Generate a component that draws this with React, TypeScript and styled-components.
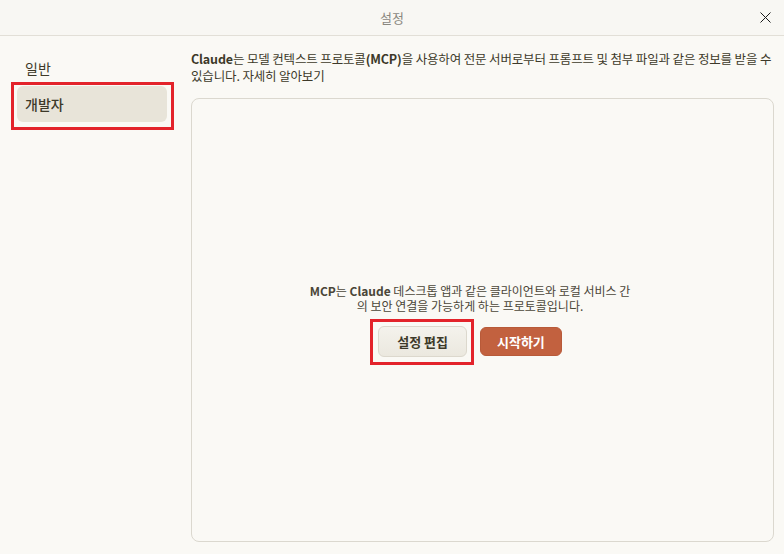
import React from "react";
import styled, { createGlobalStyle } from "styled-components";

const GlobalStyle = createGlobalStyle`
  html, body { margin: 0; padding: 0; background: #faf9f5; }
  body {
    font-family: "Noto Sans", "Noto Sans CJK KR", sans-serif;
    color: #3d3929;
  }
`;

const Window = styled.div`
  width: 784px;
  height: 554px;
  display: flex;
  flex-direction: column;
  background: #faf9f5;
  overflow: hidden;
`;

const TitleBar = styled.div`
  height: 35px;
  flex: none;
  display: grid;
  grid-template-columns: 1fr auto 1fr;
  align-items: center;
  background: #f8f7f3;
  border-bottom: 1px solid #e2dfd7;
`;

const Title = styled.div`
  grid-column: 2;
  font-size: 13px;
  color: #8a877f;
  font-family: "Noto Sans CJK KR", sans-serif;
`;

const CloseButton = styled.button`
  grid-column: 3;
  justify-self: end;
  margin-right: 12px;
  width: 14px;
  height: 14px;
  padding: 0;
  border: none;
  background: transparent;
  display: flex;
  align-items: center;
  justify-content: center;
`;

const Body = styled.div`
  flex: 1;
  display: flex;
  gap: 24px;
  padding: 0 10px 12px 17px;
  min-height: 0;
`;

const Sidebar = styled.nav`
  width: 150px;
  flex: none;
  padding-top: 14px;
  display: flex;
  flex-direction: column;
`;

const NavItem = styled.div<{ $active?: boolean; $marked?: boolean }>`
  position: relative;
  height: 36px;
  display: flex;
  align-items: center;
  padding-left: 8px;
  border-radius: 6px;
  font-size: 14px;
  font-family: "Noto Sans CJK KR", sans-serif;
  font-weight: ${(p) => (p.$active ? 500 : 400)};
  background: ${(p) => (p.$active ? "#e8e4d9" : "transparent")};
  color: #3d3929;
  ${(p) =>
    p.$marked &&
    `
    &::after {
      content: "";
      position: absolute;
      top: -4px; bottom: -8px; left: -6px; right: -7px;
      border: 3px solid #e3232b;
      pointer-events: none;
    }
  `}
`;

const Main = styled.main`
  flex: 1;
  display: flex;
  flex-direction: column;
  padding-top: 14px;
  min-width: 0;
`;

const Intro = styled.p`
  margin: 0 0 14px;
  font-size: 12.5px;
  letter-spacing: -0.15px;
  line-height: 17px;
  font-family: "Noto Sans CJK KR", sans-serif;
  color: #3d3929;
`;

const Strong = styled.span`
  font-weight: 700;
  font-family: "Noto Sans CJK KR", sans-serif;
`;

const Link = styled.a`
  color: #3d3929;
  text-decoration: none;
  cursor: pointer;
`;

const Panel = styled.section`
  flex: 1;
  border: 1px solid #dbd8cf;
  border-radius: 8px;
  display: flex;
  flex-direction: column;
  align-items: center;
  justify-content: center;
  padding-right: 25px;
`;

const PanelText = styled.p`
  margin: 0 0 13px;
  width: 330px;
  text-align: center;
  font-size: 12px;
  line-height: 15px;
  color: #4a4638;
  font-family: "Noto Sans CJK KR", sans-serif;
`;

const Actions = styled.div`
  display: flex;
  align-items: center;
  gap: 13px;
`;

const Button = styled.button<{ $primary?: boolean; $marked?: boolean }>`
  position: relative;
  height: ${(p) => (p.$primary ? "29px" : "31px")};
  padding: 0 ${(p) => (p.$primary ? "16px" : "18px")};
  border-radius: 6px;
  font-size: 13px;
  font-weight: 700;
  font-family: "Noto Sans CJK KR", sans-serif;
  cursor: pointer;
  border: 1px solid ${(p) => (p.$primary ? "#b85a39" : "#dcd8cd")};
  color: ${(p) => (p.$primary ? "#ffffff" : "#3d3929")};
  background: ${(p) =>
    p.$primary ? "#c2613f" : "linear-gradient(#f4f2ec, #ebe8df)"};
  ${(p) =>
    p.$marked &&
    `
    &::after {
      content: "";
      position: absolute;
      top: -8px; bottom: -9px; left: -9px; right: -8px;
      border: 3px solid #e3232b;
      pointer-events: none;
    }
  `}
`;

export default function App() {
  return (
    <>
      <GlobalStyle />
      <Window>
        <TitleBar>
          <Title>설정</Title>
          <CloseButton aria-label="닫기">
            <svg width="11" height="11" viewBox="0 0 11 11">
              <path d="M0.5 0.5 L10.5 10.5 M10.5 0.5 L0.5 10.5" stroke="#1a1a1a" strokeWidth="1" />
            </svg>
          </CloseButton>
        </TitleBar>
        <Body>
          <Sidebar>
            <NavItem>일반</NavItem>
            <NavItem $active $marked>
              개발자
            </NavItem>
          </Sidebar>
          <Main>
            <Intro>
              <Strong>Claude</Strong>는 모델 컨텍스트 프로토콜<Strong>(MCP)</Strong>을 사용하여 전문
              서버로부터 프롬프트 및 첨부 파일과 같은 정보를 받을 수 있습니다.{" "}
              <Link>자세히 알아보기</Link>
            </Intro>
            <Panel>
              <PanelText>
                <Strong>MCP</Strong>는 <Strong>Claude</Strong> 데스크톱 앱과 같은 클라이언트와 로컬
                서비스 간의 보안 연결을 가능하게 하는 프로토콜입니다.
              </PanelText>
              <Actions>
                <Button $marked>설정 편집</Button>
                <Button $primary>시작하기</Button>
              </Actions>
            </Panel>
          </Main>
        </Body>
      </Window>
    </>
  );
}
